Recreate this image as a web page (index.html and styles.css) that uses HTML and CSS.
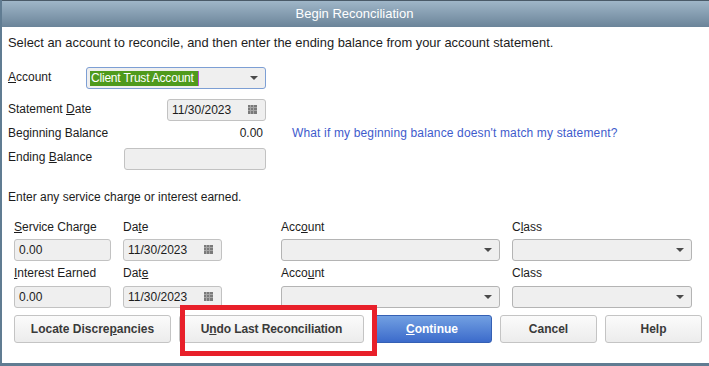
FILE: index.html
```html
<!DOCTYPE html>
<html>
<head>
<meta charset="utf-8">
<link rel="stylesheet" href="styles.css">
</head>
<body>
<div class="window">
  <div class="titlebar">Begin Reconciliation</div>
  <div class="content">
    <p class="intro">Select an account to reconcile, and then enter the ending balance from your account statement.</p>

    <div class="row row-account">
      <span class="label"><u>A</u>ccount</span>
      <div class="field select w-account">
        <span class="selected">Client Trust Account</span>
        <span class="caret"></span>
      </div>
    </div>

    <div class="row row-date">
      <span class="label">Statement <u>D</u>ate</span>
      <div class="field w-date">
        <span class="val">11/30/2023</span>
        <span class="cal"></span>
      </div>
    </div>

    <div class="row-wrap">
      <div class="row row-begin">
        <span class="label">Beginning Balance</span>
        <span class="amount">0.00</span>
      </div>
      <a class="help-link">What if my beginning balance doesn't match my statement?</a>
    </div>

    <div class="row row-end">
      <span class="label">Ending <u>B</u>alance</span>
      <div class="field w-end"></div>
    </div>

    <p class="sub">Enter any service charge or interest earned.</p>

    <div class="charges">
      <span class="label"><u>S</u>ervice Charge</span>
      <span class="label">Da<u>t</u>e</span>
      <span class="label">Acc<u>o</u>unt</span>
      <span class="label">C<u>l</u>ass</span>

      <div class="field w-amt"><span class="val">0.00</span></div>
      <div class="field w-cdate"><span class="val">11/30/2023</span><span class="cal"></span></div>
      <div class="field select w-cacc"><span class="caret"></span></div>
      <div class="field select w-class"><span class="caret"></span></div>

      <span class="label"><u>I</u>nterest Earned</span>
      <span class="label">Dat<u>e</u></span>
      <span class="label">Acco<u>u</u>nt</span>
      <span class="label">Class</span>

      <div class="field w-amt"><span class="val">0.00</span></div>
      <div class="field w-cdate"><span class="val">11/30/2023</span><span class="cal"></span></div>
      <div class="field select w-cacc"><span class="caret"></span></div>
      <div class="field select w-class"><span class="caret"></span></div>
    </div>

    <div class="buttons">
      <button class="btn b-locate">Locate Discre<u>p</u>ancies</button>
      <button class="btn b-undo">U<u>n</u>do Last Reconciliation</button>
      <button class="btn primary b-continue"><u>C</u>ontinue</button>
      <button class="btn b-cancel">Cancel</button>
      <button class="btn b-help">Help</button>
    </div>
  </div>
  <div class="callout"></div>
</div>
</body>
</html>
```

FILE: styles.css
```css
* { box-sizing: border-box; }
html, body { margin: 0; padding: 0; background: #fff; }
body {
  font-family: "Liberation Sans", Arial, sans-serif;
  font-size: 12px;
  color: #1c1c1c;
}
.window {
  position: relative;
  width: 709px;
  height: 366px;
  border-left: 2px solid #607c92;
  border-bottom: 3px solid #607c92;
  background: #fff;
  overflow: hidden;
}
.titlebar {
  height: 27px;
  margin-left: -2px;
  border-top: 1px solid #4a5a68;
  background: linear-gradient(#9fb6c8, #6b8499);
  color: #fff;
  font-size: 13px;
  line-height: 26px;
  text-align: center;
}
.content {
  padding: 0 0 0 6px;
}
.intro {
  margin: 9px 0 0;
  font-size: 12.9px;
  line-height: 14px;
}
.row {
  display: flex;
  align-items: center;
  justify-content: space-between;
  width: 258px;
  height: 22px;
}
.row .label { margin-top: -2px; }
.row-account { margin-top: 17px; }
.row-date { margin-top: 10px; }
.row-wrap {
  display: flex;
  align-items: center;
  height: 22px;
  margin-top: 1px;
}
.row-begin .label { margin-top: 0; }
.row-end { margin-top: 4px; }
.row-end .label { margin-top: -4px; }
.amount { padding-right: 3px; }
.help-link {
  margin-left: 26px;
  color: #3e5bcc;
  text-decoration: none;
  letter-spacing: 0.15px;
}
.field {
  position: relative;
  height: 22px;
  background: #efefef;
  border: 1px solid #c2c2c2;
  border-radius: 3px;
  display: flex;
  align-items: center;
}
.field .val { padding-left: 4px; }
.select { border-color: #b4b4b4; }
.w-account {
  width: 180px;
  border-color: #7d9fd4;
  padding-left: 3px;
}
.w-date { width: 99px; }
.w-end { width: 142px; }
.selected {
  background: #4f9a1c;
  color: #fff;
  height: 15px;
  line-height: 15px;
  padding: 0 1px;
  width: 109px;
  border-right: 1px solid #b455d8;
  white-space: nowrap;
  letter-spacing: -0.2px;
}
.caret {
  position: absolute;
  right: 7px;
  top: 8px;
  width: 0;
  height: 0;
  border-left: 4px solid transparent;
  border-right: 4px solid transparent;
  border-top: 4px solid #4a4a4a;
}
.cal {
  position: absolute;
  right: 8px;
  top: 5px;
  width: 9px;
  height: 9px;
  background-color: #7a7a7a;
  background-image:
    linear-gradient(90deg, transparent 2px, #a6a6a6 2px, #a6a6a6 3px, transparent 3px, transparent 5px, #a6a6a6 5px, #a6a6a6 6px, transparent 6px),
    linear-gradient(transparent 2px, #a6a6a6 2px, #a6a6a6 3px, transparent 3px, transparent 5px, #a6a6a6 5px, #a6a6a6 6px, transparent 6px);
}
.sub {
  margin: 20px 0 0;
  line-height: 14px;
}
.charges {
  display: grid;
  grid-template-columns: 109px 158px 231px 180px;
  grid-template-rows: 14px 22px 14px 22px;
  row-gap: 5px;
  margin: 16px 0 0 6px;
  align-items: center;
}
.charges .label { line-height: 14px; }
.charges .field:nth-child(n+9) { margin-top: 1px; }
.w-amt { width: 97px; }
.w-cdate { width: 99px; }
.w-cacc { width: 219px; }
.w-class { width: 180px; }
.buttons {
  display: flex;
  gap: 8px;
  margin: 8px 0 0 6px;
}
.btn {
  height: 28px;
  font-family: "Liberation Sans", Arial, sans-serif;
  font-size: 12px;
  font-weight: bold;
  color: #3a3a3a;
  background: linear-gradient(#fbfbfb, #ececec);
  border: 1px solid #c4c4c4;
  border-radius: 3px;
  padding: 0;
}
.b-undo { letter-spacing: -0.1px; }
.b-locate { width: 157px; }
.b-undo { width: 185px; }
.b-continue { width: 120px; }
.b-cancel { width: 97px; }
.b-help { width: 97px; }
.primary {
  color: #fff;
  background: linear-gradient(#72a0e2, #3c6bcb);
  border-color: #3560b4;
}
.callout {
  position: absolute;
  left: 178px;
  top: 305px;
  width: 197px;
  height: 51px;
  border: 5px solid #e8202a;
}
```
